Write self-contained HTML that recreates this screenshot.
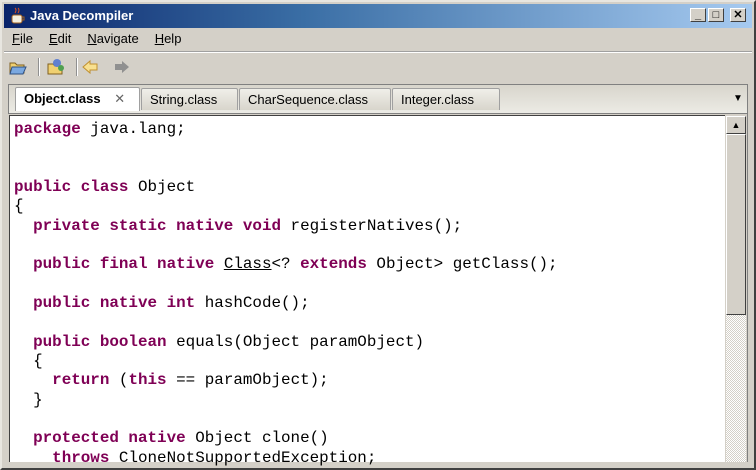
<!DOCTYPE html>
<html><head><style>
*{margin:0;padding:0;box-sizing:border-box}
body{width:756px;height:462px;overflow:hidden;background:#d4d0c8;font-family:"Liberation Sans",sans-serif;position:relative}
.abs{position:absolute}
#title{left:4px;top:4px;width:748px;height:24px;background:linear-gradient(90deg,#0a246a,#3a6ea5 40%,#a6caf0);color:#fff;font:bold 13px "Liberation Sans",sans-serif;line-height:24px;padding-left:26px}
.wb{position:absolute;top:4px;width:16px;height:14px;background:#d4d0c8;border:1px solid;border-color:#fff #404040 #404040 #fff;font:bold 11px "Liberation Sans";color:#000;text-align:center;line-height:12px}
#menu{left:4px;top:29px;height:20px;font-size:13px;line-height:20px}
#menu span{margin:0 8px 0 8px}
#menu u{text-decoration:underline}
.tab{position:absolute;top:88px;height:22px;border:1px solid #a0a0a0;border-bottom:none;background:linear-gradient(#f0efe9,#d8d5cc);font-size:13px;line-height:21px;padding-left:8px;border-radius:2px 2px 0 0}
#code{left:9px;top:115px;width:716px;height:347px;background:#fff;border-left:1px solid #404040;border-top:1px solid #404040;font:15.9px "Liberation Mono",monospace;line-height:19.33px;padding:4px 0 0 4px;white-space:pre;color:#000}
b{color:#7f0055}
</style></head><body>
<div class="abs" style="left:0;top:0;width:756px;height:470px;border:2px solid;border-color:#e8e6e0 #404040 #404040 #e8e6e0"></div>
<div id="title" class="abs">Java Decompiler
<svg class="abs" style="left:5px;top:3px" width="18" height="18"><rect x="3" y="8" width="10" height="8" rx="2" fill="#f4f0e0" stroke="#a06020"/><path d="M13 10h2v3h-2" fill="none" stroke="#a06020"/><path d="M6 6q2-3 0-5M9 6q2-3 0-5" stroke="#e05020" fill="none"/></svg>
<div class="wb" style="left:686px">_</div><div class="wb" style="left:704px">□</div><div class="wb" style="left:726px">✕</div>
</div>
<div id="menu" class="abs"><span><u>F</u>ile</span><span><u>E</u>dit</span><span><u>N</u>avigate</span><span><u>H</u>elp</span></div>
<div class="abs" style="left:4px;top:51px;width:748px;height:1px;background:#a0a0a0"></div>
<div class="abs" style="left:4px;top:52px;width:748px;height:1px;background:#fff"></div>
<svg class="abs" style="left:8px;top:57px" width="130" height="20">
<path d="M2 6h5l2 2h7v8H2z" fill="#f0d070" stroke="#806020"/><path d="M4 10h14l-3 7H2z" fill="#7aa8e0" stroke="#305080"/>
<rect x="30" y="1" width="1" height="18" fill="#909090"/><rect x="31" y="1" width="1" height="18" fill="#fff"/>
<path d="M40 7h5l2 2h7v8H40z" fill="#f0d070" stroke="#806020"/><circle cx="49" cy="6" r="4" fill="#6080d0"/><circle cx="53" cy="11" r="3" fill="#50a050"/>
<rect x="68" y="1" width="1" height="18" fill="#909090"/><rect x="69" y="1" width="1" height="18" fill="#fff"/>
<path d="M75 10l7-6v3h7v6h-7v3z" fill="#f8e090" stroke="#c09030"/>
<path d="M121 10l-7-6v3h-7v6h7v3z" fill="#909090"/>
</svg>
<div class="abs" style="left:8px;top:84px;width:743px;height:30px;border:1px solid #808080;background:linear-gradient(#d8d5cc,#ecebe5)"></div>
<div class="tab" style="left:15px;width:125px;background:#fff;font-weight:bold;top:87px;height:24px">Object.class <span style="font-weight:normal;color:#666;margin-left:10px">✕</span></div>
<div class="tab" style="left:141px;width:97px">String.class</div>
<div class="tab" style="left:239px;width:152px">CharSequence.class</div>
<div class="tab" style="left:392px;width:108px">Integer.class</div>
<div class="abs" style="left:733px;top:93px;font-size:10px">▼</div>
<div id="code" class="abs"><b>package</b> java.lang;


<b>public class</b> Object
{
  <b>private static native void</b> registerNatives();

  <b>public final native</b> <u>Class</u>&lt;? <b>extends</b> Object&gt; getClass();

  <b>public native int</b> hashCode();

  <b>public boolean</b> equals(Object paramObject)
  {
    <b>return</b> (<b>this</b> == paramObject);
  }

  <b>protected native</b> Object clone()
    <b>throws</b> CloneNotSupportedException;</div>
<div class="abs" style="left:726px;top:116px;width:20px;height:346px;background:repeating-conic-gradient(#fff 0 25%,#d4d0c8 0 50%) 0 0/2px 2px"></div>
<div class="abs" style="left:726px;top:116px;width:20px;height:18px;background:#d4d0c8;border:1px solid;border-color:#fff #404040 #404040 #fff;font-size:9px;text-align:center;line-height:16px">▲</div>
<div class="abs" style="left:726px;top:134px;width:20px;height:181px;background:#d4d0c8;border:1px solid;border-color:#fff #404040 #404040 #fff"></div>
<div class="abs" style="left:747px;top:84px;width:4px;height:378px;background:#d4d0c8;border-left:1px solid #808080"></div>
</body></html>
